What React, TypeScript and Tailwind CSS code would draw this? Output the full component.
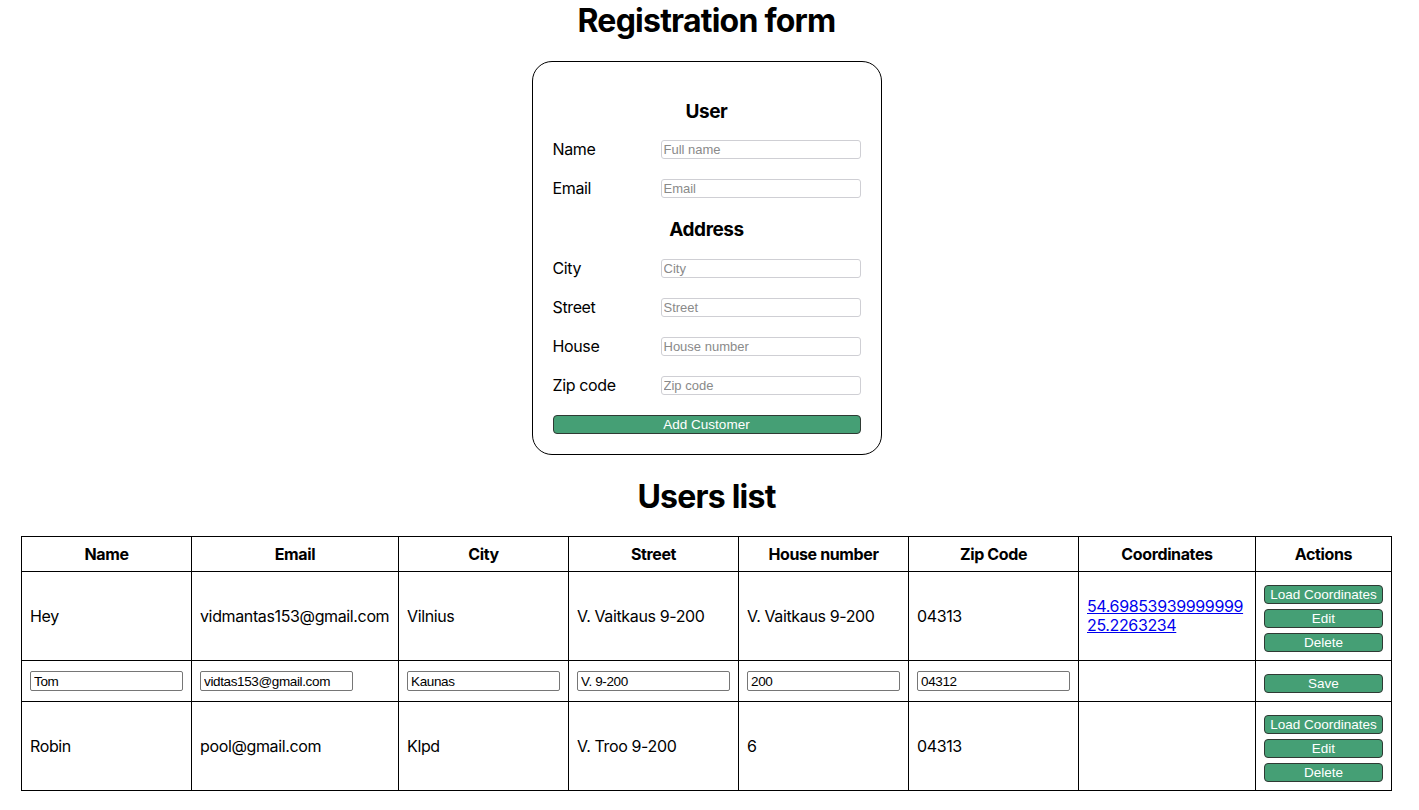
import React from "react";

const inter = { fontFamily: "Inter, 'Noto Sans', sans-serif" };

function FormRow({ label, placeholder }: { label: string; placeholder: string }) {
  return (
    <div className="flex items-center h-[19px]">
      <label className="w-[108px] text-[16px] leading-[19px] text-black tracking-[-0.023em]">{label}</label>
      <input
        placeholder={placeholder}
        className="w-[200px] h-[19px] border border-[#cfcfd4] rounded-[3px] px-[2px] text-[13px] leading-[15px] text-black placeholder:text-[#8a8a8a] outline-none font-['Liberation_Sans',Arial,sans-serif]"
      />
    </div>
  );
}

function GreenButton({ children }: { children: React.ReactNode }) {
  return (
    <button className="mt-[5px] w-full h-[19px] bg-[#459f75] border border-[#2f3a34] rounded-[4px] text-white text-[13.5px] leading-[16px] font-['Liberation_Sans',Arial,sans-serif]">
      {children}
    </button>
  );
}

function CellInput({ value }: { value: string }) {
  return (
    <input
      defaultValue={value}
      className="w-[153px] h-[20px] border border-[#767676] rounded-[2px] px-[3px] text-[13.5px] leading-[16px] text-black outline-none font-['Liberation_Sans',Arial,sans-serif]"
    />
  );
}

const td = "border border-black px-[8px] py-[8px] align-middle text-[16px] leading-[19px] text-left tracking-[-0.023em]";
const th = "border border-black px-[8px] pt-[8px] pb-[7px] text-[16px] leading-[19px] font-bold text-center tracking-[-0.023em]";

export default function App() {
  return (
    <div className="w-[1413px] flex flex-col items-center bg-white text-black pb-[20px]" style={inter}>
      <h1 className="pt-[1px] text-[32px] leading-[39px] font-bold tracking-[-0.024em]">Registration form</h1>

      <form
        className="mt-[21px] w-[350px] border border-black rounded-[20px] px-[20px] pt-[38px] pb-[20px] flex flex-col"
        onSubmit={(e) => e.preventDefault()}
      >
        <h3 className="text-[19px] leading-[23px] font-bold text-center tracking-[-0.023em]">User</h3>
        <div className="mt-[17px]">
          <FormRow label="Name" placeholder="Full name" />
        </div>
        <div className="mt-[20px]">
          <FormRow label="Email" placeholder="Email" />
        </div>
        <h3 className="mt-[20px] text-[19px] leading-[23px] font-bold text-center tracking-[-0.023em]">Address</h3>
        <div className="mt-[18px]">
          <FormRow label="City" placeholder="City" />
        </div>
        <div className="mt-[20px]">
          <FormRow label="Street" placeholder="Street" />
        </div>
        <div className="mt-[20px]">
          <FormRow label="House" placeholder="House number" />
        </div>
        <div className="mt-[20px]">
          <FormRow label="Zip code" placeholder="Zip code" />
        </div>
        <button className="mt-[20px] w-full h-[19px] bg-[#459f75] border border-[#2f3a34] rounded-[4px] text-white text-[13.5px] leading-[16px] font-['Liberation_Sans',Arial,sans-serif]">
          Add Customer
        </button>
      </form>

      <h1 className="mt-[22px] text-[32px] leading-[39px] font-bold tracking-[-0.024em]">Users list</h1>

      <table className="mt-[20px] w-[1371px] table-fixed border-collapse border border-black">
        <colgroup>
          <col className="w-[170px]" />
          <col className="w-[207px]" />
          <col className="w-[170px]" />
          <col className="w-[170px]" />
          <col className="w-[170px]" />
          <col className="w-[170px]" />
          <col className="w-[177px]" />
          <col className="w-[136px]" />
        </colgroup>
        <thead>
          <tr>
            <th className={th}>Name</th>
            <th className={th}>Email</th>
            <th className={th}>City</th>
            <th className={th}>Street</th>
            <th className={th}>House number</th>
            <th className={th}>Zip Code</th>
            <th className={th}>Coordinates</th>
            <th className={th}>Actions</th>
          </tr>
        </thead>
        <tbody>
          <tr>
            <td className={td}>Hey</td>
            <td className={td}>vidmantas153@gmail.com</td>
            <td className={td}>Vilnius</td>
            <td className={td}>V. Vaitkaus 9-200</td>
            <td className={td}>V. Vaitkaus 9-200</td>
            <td className={td}>04313</td>
            <td className={td}>
              <a href="#" className="text-[#0000ee] underline">
                54.69853939999999
                <br />
                25.2263234
              </a>
            </td>
            <td className={td}>
              <div className="flex flex-col tracking-normal">
                <GreenButton>Load Coordinates</GreenButton>
                <GreenButton>Edit</GreenButton>
                <GreenButton>Delete</GreenButton>
              </div>
            </td>
          </tr>
          <tr>
            <td className={td}><CellInput value="Tom" /></td>
            <td className={td}><CellInput value="vidtas153@gmail.com" /></td>
            <td className={td}><CellInput value="Kaunas" /></td>
            <td className={td}><CellInput value="V. 9-200" /></td>
            <td className={td}><CellInput value="200" /></td>
            <td className={td}><CellInput value="04312" /></td>
            <td className={td}></td>
            <td className={td}>
              <div className="flex flex-col tracking-normal">
                <GreenButton>Save</GreenButton>
              </div>
            </td>
          </tr>
          <tr>
            <td className={td}>Robin</td>
            <td className={td}>pool@gmail.com</td>
            <td className={td}>Klpd</td>
            <td className={td}>V. Troo 9-200</td>
            <td className={td}>6</td>
            <td className={td}>04313</td>
            <td className={td}></td>
            <td className={td}>
              <div className="flex flex-col tracking-normal">
                <GreenButton>Load Coordinates</GreenButton>
                <GreenButton>Edit</GreenButton>
                <GreenButton>Delete</GreenButton>
              </div>
            </td>
          </tr>
        </tbody>
      </table>
    </div>
  );
}
